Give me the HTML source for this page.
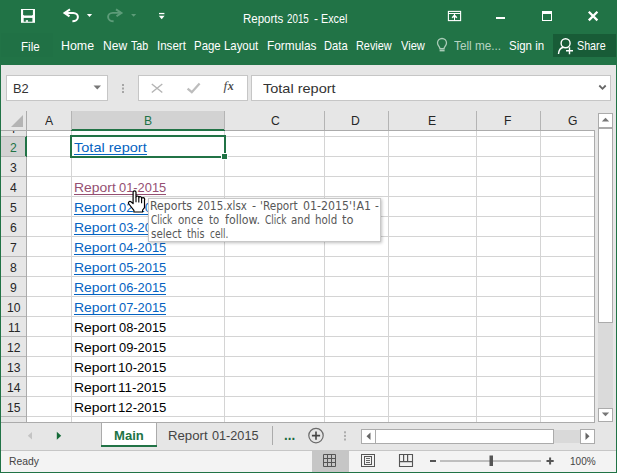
<!DOCTYPE html>
<html><head><meta charset="utf-8"><title>Reports 2015 - Excel</title>
<style>
html,body{margin:0;padding:0;}
body{width:617px;height:473px;overflow:hidden;position:relative;background:#e6e6e6;font-family:"Liberation Sans",sans-serif;}
.a{position:absolute;}
.t{position:absolute;white-space:pre;transform-origin:0 0;}
svg{position:absolute;overflow:visible;}
</style></head><body>
<div class="a" style="left:0px;top:0px;width:617px;height:65px;background:#217346;"></div>
<div class="a" style="left:1px;top:33px;width:52px;height:24px;background:#207145;"></div>
<div class="a" style="left:553px;top:34px;width:63px;height:23px;background:#185c37;"></div>
<div class="a" style="left:6px;top:75px;width:102px;height:26px;background:#fff;box-sizing:border-box;border:1px solid #c6c6c6;"></div>
<div class="a" style="left:138px;top:75px;width:110px;height:26px;background:#fff;box-sizing:border-box;border:1px solid #c6c6c6;"></div>
<div class="a" style="left:251px;top:75px;width:360px;height:26px;background:#fff;box-sizing:border-box;border:1px solid #c6c6c6;"></div>
<div class="a" style="left:1px;top:111px;width:594px;height:311px;background:#fff;"></div>
<div class="a" style="left:1px;top:111px;width:594px;height:19px;background:#e6e6e6;"></div>
<div class="a" style="left:1px;top:130px;width:594px;height:1px;background:#ababab;"></div>
<div class="a" style="left:1px;top:131px;width:25px;height:291px;background:#e6e6e6;"></div>
<div class="a" style="left:26px;top:111px;width:1px;height:311px;background:#ababab;"></div>
<div class="a" style="left:71px;top:111px;width:154px;height:18px;background:#d2d2d2;"></div>
<div class="a" style="left:71px;top:129px;width:154px;height:2px;background:#217346;"></div>
<div class="a" style="left:1px;top:137px;width:24px;height:19px;background:#d2d2d2;"></div>
<div class="a" style="left:25px;top:136px;width:2px;height:21px;background:#217346;"></div>
<div class="a" style="left:71px;top:131px;width:1px;height:291px;background:#d4d4d4;"></div>
<div class="a" style="left:71px;top:111px;width:1px;height:19px;background:#b4b4b4;"></div>
<div class="a" style="left:224px;top:131px;width:1px;height:291px;background:#d4d4d4;"></div>
<div class="a" style="left:224px;top:111px;width:1px;height:19px;background:#b4b4b4;"></div>
<div class="a" style="left:324px;top:131px;width:1px;height:291px;background:#d4d4d4;"></div>
<div class="a" style="left:324px;top:111px;width:1px;height:19px;background:#b4b4b4;"></div>
<div class="a" style="left:388px;top:131px;width:1px;height:291px;background:#d4d4d4;"></div>
<div class="a" style="left:388px;top:111px;width:1px;height:19px;background:#b4b4b4;"></div>
<div class="a" style="left:476px;top:131px;width:1px;height:291px;background:#d4d4d4;"></div>
<div class="a" style="left:476px;top:111px;width:1px;height:19px;background:#b4b4b4;"></div>
<div class="a" style="left:540px;top:131px;width:1px;height:291px;background:#d4d4d4;"></div>
<div class="a" style="left:540px;top:111px;width:1px;height:19px;background:#b4b4b4;"></div>
<div class="a" style="left:594px;top:130px;width:1px;height:293px;background:#ababab;"></div>
<div class="a" style="left:27px;top:136px;width:567px;height:1px;background:#d4d4d4;"></div>
<div class="a" style="left:1px;top:136px;width:25px;height:1px;background:#b8b8b8;"></div>
<div class="a" style="left:27px;top:156px;width:567px;height:1px;background:#d4d4d4;"></div>
<div class="a" style="left:1px;top:156px;width:25px;height:1px;background:#b8b8b8;"></div>
<div class="a" style="left:27px;top:176px;width:567px;height:1px;background:#d4d4d4;"></div>
<div class="a" style="left:1px;top:176px;width:25px;height:1px;background:#b8b8b8;"></div>
<div class="a" style="left:27px;top:196px;width:567px;height:1px;background:#d4d4d4;"></div>
<div class="a" style="left:1px;top:196px;width:25px;height:1px;background:#b8b8b8;"></div>
<div class="a" style="left:27px;top:216px;width:567px;height:1px;background:#d4d4d4;"></div>
<div class="a" style="left:1px;top:216px;width:25px;height:1px;background:#b8b8b8;"></div>
<div class="a" style="left:27px;top:236px;width:567px;height:1px;background:#d4d4d4;"></div>
<div class="a" style="left:1px;top:236px;width:25px;height:1px;background:#b8b8b8;"></div>
<div class="a" style="left:27px;top:256px;width:567px;height:1px;background:#d4d4d4;"></div>
<div class="a" style="left:1px;top:256px;width:25px;height:1px;background:#b8b8b8;"></div>
<div class="a" style="left:27px;top:276px;width:567px;height:1px;background:#d4d4d4;"></div>
<div class="a" style="left:1px;top:276px;width:25px;height:1px;background:#b8b8b8;"></div>
<div class="a" style="left:27px;top:296px;width:567px;height:1px;background:#d4d4d4;"></div>
<div class="a" style="left:1px;top:296px;width:25px;height:1px;background:#b8b8b8;"></div>
<div class="a" style="left:27px;top:316px;width:567px;height:1px;background:#d4d4d4;"></div>
<div class="a" style="left:1px;top:316px;width:25px;height:1px;background:#b8b8b8;"></div>
<div class="a" style="left:27px;top:336px;width:567px;height:1px;background:#d4d4d4;"></div>
<div class="a" style="left:1px;top:336px;width:25px;height:1px;background:#b8b8b8;"></div>
<div class="a" style="left:27px;top:356px;width:567px;height:1px;background:#d4d4d4;"></div>
<div class="a" style="left:1px;top:356px;width:25px;height:1px;background:#b8b8b8;"></div>
<div class="a" style="left:27px;top:376px;width:567px;height:1px;background:#d4d4d4;"></div>
<div class="a" style="left:1px;top:376px;width:25px;height:1px;background:#b8b8b8;"></div>
<div class="a" style="left:27px;top:396px;width:567px;height:1px;background:#d4d4d4;"></div>
<div class="a" style="left:1px;top:396px;width:25px;height:1px;background:#b8b8b8;"></div>
<div class="a" style="left:27px;top:416px;width:567px;height:1px;background:#d4d4d4;"></div>
<div class="a" style="left:1px;top:416px;width:25px;height:1px;background:#b8b8b8;"></div>
<div class="a" style="left:1px;top:422px;width:594px;height:1px;background:#ababab;"></div>
<svg style="left:0;top:0" width="617" height="473"><polygon points="23,115 23,127 11,127" fill="#b4b4b4"/></svg>
<div class="a" style="left:70px;top:135px;width:156px;height:23px;background:transparent;box-sizing:border-box;border:2px solid #217346;"></div>
<div class="a" style="left:221px;top:153px;width:7px;height:7px;background:#fff;"></div>
<div class="a" style="left:222px;top:154px;width:5px;height:5px;background:#217346;"></div>
<div class="a" style="left:598px;top:113px;width:15px;height:15px;background:#fff;box-sizing:border-box;border:1px solid #ababab;"></div>
<div class="a" style="left:598px;top:128px;width:15px;height:195px;background:#fff;box-sizing:border-box;border:1px solid #ababab;"></div>
<div class="a" style="left:598px;top:323px;width:15px;height:85px;background:#dadada;"></div>
<div class="a" style="left:598px;top:408px;width:15px;height:14px;background:#fff;box-sizing:border-box;border:1px solid #ababab;"></div>
<div class="a" style="left:361px;top:429px;width:15px;height:15px;background:#fff;box-sizing:border-box;border:1px solid #ababab;"></div>
<div class="a" style="left:375px;top:429px;width:179px;height:15px;background:#fff;box-sizing:border-box;border:1px solid #ababab;"></div>
<div class="a" style="left:554px;top:430px;width:26px;height:13px;background:#d9d9d9;"></div>
<div class="a" style="left:580px;top:429px;width:15px;height:15px;background:#fff;box-sizing:border-box;border:1px solid #ababab;"></div>
<div class="a" style="left:101px;top:423px;width:56px;height:23px;background:#fff;box-sizing:border-box;border-left:1px solid #ababab;border-right:1px solid #ababab;"></div>
<div class="a" style="left:101px;top:445px;width:56px;height:2px;background:#217346;"></div>
<div class="a" style="left:272px;top:426px;width:1px;height:19px;background:#ababab;"></div>
<div class="a" style="left:1px;top:450px;width:615px;height:1px;background:#c6c6c6;"></div>
<div class="a" style="left:1px;top:451px;width:615px;height:21px;background:#f3f3f3;"></div>
<div class="a" style="left:311.5px;top:451px;width:37px;height:21px;background:#c6c6c6;"></div>
<div class="a" style="left:0px;top:0px;width:1px;height:473px;background:#217346;"></div>
<div class="a" style="left:616px;top:0px;width:1px;height:473px;background:#217346;"></div>
<div class="a" style="left:0px;top:472px;width:617px;height:1px;background:#217346;"></div>
<div class="a" style="left:148px;top:198px;width:233px;height:44px;background:#fff;box-sizing:border-box;border:1px solid #c8c8c8;box-shadow:1px 1px 3px rgba(0,0,0,0.25);z-index:2;"></div>
<div class="a" style="left:12px;top:131px;width:4px;height:2px;overflow:hidden"><div class="t" style="left:-1.6px;top:-9.4px;font-size:12.8px;line-height:17px;color:#262626;transform:scaleX(0.95)">1</div></div>
<div class="t" style="left:0;top:10.74px;width:617px;height:16px;line-height:16px;font-size:12.3px;color:#fff;"><span class="t" style="left:242.76px;top:0;transform:scaleX(0.9354)">Reports</span> <span class="t" style="left:286.80px;top:0;transform:scaleX(0.7959)">2015</span> <span class="t" style="left:314.10px;top:0;transform:scaleX(0.9750)">-</span> <span class="t" style="left:321.12px;top:0;transform:scaleX(0.8752)">Excel</span></div>
<div class="t" style="left:20.58px;top:38.63px;line-height:16px;font-size:12.6px;color:#fff;transform:scaleX(0.9228);">File</div>
<div class="t" style="left:60.82px;top:37.63px;line-height:16px;font-size:12.6px;color:#fff;transform:scaleX(0.9850);">Home</div>
<div class="t" style="left:0;top:37.63px;width:617px;height:16px;line-height:16px;font-size:12.6px;color:#fff;"><span class="t" style="left:102.74px;top:0;transform:scaleX(0.9562)">New</span> <span class="t" style="left:131.40px;top:0;transform:scaleX(0.8522)">Tab</span></div>
<div class="t" style="left:156.68px;top:37.63px;line-height:16px;font-size:12.6px;color:#fff;transform:scaleX(0.9162);">Insert</div>
<div class="t" style="left:193.89px;top:37.63px;line-height:16px;font-size:12.6px;color:#fff;transform:scaleX(0.9085);">Page Layout</div>
<div class="t" style="left:266.56px;top:37.63px;line-height:16px;font-size:12.6px;color:#fff;transform:scaleX(0.9436);">Formulas</div>
<div class="t" style="left:323.91px;top:37.63px;line-height:16px;font-size:12.6px;color:#fff;transform:scaleX(0.8868);">Data</div>
<div class="t" style="left:355.94px;top:37.63px;line-height:16px;font-size:12.6px;color:#fff;transform:scaleX(0.8641);">Review</div>
<div class="t" style="left:401.20px;top:37.63px;line-height:16px;font-size:12.6px;color:#fff;transform:scaleX(0.8830);">View</div>
<div class="t" style="left:453.70px;top:37.63px;line-height:16px;font-size:12.6px;color:#b7d3c2;transform:scaleX(0.9341);">Tell me...</div>
<div class="t" style="left:509.40px;top:37.63px;line-height:16px;font-size:12.6px;color:#fff;transform:scaleX(0.9116);">Sign in</div>
<div class="t" style="left:577.30px;top:37.06px;line-height:17px;font-size:12.8px;color:#fff;transform:scaleX(0.8375);">Share</div>
<div class="t" style="left:12.51px;top:80.00px;line-height:17px;font-size:13px;color:#333;transform:scaleX(0.9884);">B2</div>
<div class="t" style="left:263.00px;top:80.00px;line-height:17px;font-size:13px;color:#333;transform:scaleX(1.1159);">Total report</div>
<div class="t" style="left:44.73px;top:112.06px;line-height:17px;font-size:12.8px;color:#262626;transform:scaleX(0.9500);">A</div>
<div class="t" style="left:270.73px;top:112.06px;line-height:17px;font-size:12.8px;color:#262626;transform:scaleX(0.9500);">C</div>
<div class="t" style="left:351.25px;top:112.06px;line-height:17px;font-size:12.8px;color:#262626;transform:scaleX(0.9500);">D</div>
<div class="t" style="left:427.73px;top:112.06px;line-height:17px;font-size:12.8px;color:#262626;transform:scaleX(0.9500);">E</div>
<div class="t" style="left:504.23px;top:112.06px;line-height:17px;font-size:12.8px;color:#262626;transform:scaleX(0.9500);">F</div>
<div class="t" style="left:567.73px;top:112.06px;line-height:17px;font-size:12.8px;color:#262626;transform:scaleX(0.9500);">G</div>
<div class="t" style="left:144.03px;top:112.06px;line-height:17px;font-size:12.8px;color:#217346;transform:scaleX(0.9500);">B</div>
<div class="t" style="left:10.28px;top:139.06px;line-height:17px;font-size:12.8px;color:#217346;transform:scaleX(0.9500);">2</div>
<div class="t" style="left:10.28px;top:159.06px;line-height:17px;font-size:12.8px;color:#262626;transform:scaleX(0.9500);">3</div>
<div class="t" style="left:10.28px;top:179.06px;line-height:17px;font-size:12.8px;color:#262626;transform:scaleX(0.9500);">4</div>
<div class="t" style="left:10.28px;top:199.06px;line-height:17px;font-size:12.8px;color:#262626;transform:scaleX(0.9500);">5</div>
<div class="t" style="left:10.28px;top:219.06px;line-height:17px;font-size:12.8px;color:#262626;transform:scaleX(0.9500);">6</div>
<div class="t" style="left:10.28px;top:239.06px;line-height:17px;font-size:12.8px;color:#262626;transform:scaleX(0.9500);">7</div>
<div class="t" style="left:10.28px;top:259.06px;line-height:17px;font-size:12.8px;color:#262626;transform:scaleX(0.9500);">8</div>
<div class="t" style="left:10.28px;top:279.06px;line-height:17px;font-size:12.8px;color:#262626;transform:scaleX(0.9500);">9</div>
<div class="t" style="left:7.49px;top:299.06px;line-height:17px;font-size:12.8px;color:#262626;transform:scaleX(0.9500);">10</div>
<div class="t" style="left:7.95px;top:319.06px;line-height:17px;font-size:12.8px;color:#262626;transform:scaleX(0.9500);">11</div>
<div class="t" style="left:7.49px;top:339.06px;line-height:17px;font-size:12.8px;color:#262626;transform:scaleX(0.9500);">12</div>
<div class="t" style="left:7.49px;top:359.06px;line-height:17px;font-size:12.8px;color:#262626;transform:scaleX(0.9500);">13</div>
<div class="t" style="left:7.49px;top:379.06px;line-height:17px;font-size:12.8px;color:#262626;transform:scaleX(0.9500);">14</div>
<div class="t" style="left:7.49px;top:399.06px;line-height:17px;font-size:12.8px;color:#262626;transform:scaleX(0.9500);">15</div>
<div class="t" style="left:74.00px;top:138.89px;line-height:17px;font-size:13.3px;color:#0563c1;transform:scaleX(1.0925);">Total report</div>
<div class="a" style="left:74px;top:154px;width:73px;height:1px;background:#0563c1"></div>
<div class="t" style="left:0;top:178.89px;width:617px;height:17px;line-height:17px;font-size:13.3px;color:#954f72;"><span class="t" style="left:73.85px;top:0;transform:scaleX(1.0480)">Report</span> <span class="t" style="left:118.90px;top:0;transform:scaleX(0.9689)">01-2015</span></div>
<div class="a" style="left:74px;top:194px;width:92px;height:1px;background:#954f72"></div>
<div class="t" style="left:0;top:198.89px;width:617px;height:17px;line-height:17px;font-size:13.3px;color:#0563c1;"><span class="t" style="left:73.85px;top:0;transform:scaleX(1.0480)">Report</span> <span class="t" style="left:118.90px;top:0;transform:scaleX(0.9689)">02-2015</span></div>
<div class="a" style="left:74px;top:214px;width:92px;height:1px;background:#0563c1"></div>
<div class="t" style="left:0;top:218.89px;width:617px;height:17px;line-height:17px;font-size:13.3px;color:#0563c1;"><span class="t" style="left:73.85px;top:0;transform:scaleX(1.0480)">Report</span> <span class="t" style="left:118.90px;top:0;transform:scaleX(0.9689)">03-2015</span></div>
<div class="a" style="left:74px;top:234px;width:92px;height:1px;background:#0563c1"></div>
<div class="t" style="left:0;top:238.89px;width:617px;height:17px;line-height:17px;font-size:13.3px;color:#0563c1;"><span class="t" style="left:73.85px;top:0;transform:scaleX(1.0480)">Report</span> <span class="t" style="left:118.90px;top:0;transform:scaleX(0.9689)">04-2015</span></div>
<div class="a" style="left:74px;top:254px;width:92px;height:1px;background:#0563c1"></div>
<div class="t" style="left:0;top:258.89px;width:617px;height:17px;line-height:17px;font-size:13.3px;color:#0563c1;"><span class="t" style="left:73.85px;top:0;transform:scaleX(1.0480)">Report</span> <span class="t" style="left:118.90px;top:0;transform:scaleX(0.9689)">05-2015</span></div>
<div class="a" style="left:74px;top:274px;width:92px;height:1px;background:#0563c1"></div>
<div class="t" style="left:0;top:278.89px;width:617px;height:17px;line-height:17px;font-size:13.3px;color:#0563c1;"><span class="t" style="left:73.85px;top:0;transform:scaleX(1.0480)">Report</span> <span class="t" style="left:118.90px;top:0;transform:scaleX(0.9689)">06-2015</span></div>
<div class="a" style="left:74px;top:294px;width:92px;height:1px;background:#0563c1"></div>
<div class="t" style="left:0;top:298.89px;width:617px;height:17px;line-height:17px;font-size:13.3px;color:#0563c1;"><span class="t" style="left:73.85px;top:0;transform:scaleX(1.0480)">Report</span> <span class="t" style="left:118.90px;top:0;transform:scaleX(0.9689)">07-2015</span></div>
<div class="a" style="left:74px;top:314px;width:92px;height:1px;background:#0563c1"></div>
<div class="t" style="left:0;top:318.89px;width:617px;height:17px;line-height:17px;font-size:13.3px;color:#000;"><span class="t" style="left:73.85px;top:0;transform:scaleX(1.0480)">Report</span> <span class="t" style="left:118.90px;top:0;transform:scaleX(0.9689)">08-2015</span></div>
<div class="t" style="left:0;top:338.89px;width:617px;height:17px;line-height:17px;font-size:13.3px;color:#000;"><span class="t" style="left:73.85px;top:0;transform:scaleX(1.0480)">Report</span> <span class="t" style="left:118.90px;top:0;transform:scaleX(0.9689)">09-2015</span></div>
<div class="t" style="left:0;top:358.89px;width:617px;height:17px;line-height:17px;font-size:13.3px;color:#000;"><span class="t" style="left:73.85px;top:0;transform:scaleX(1.0480)">Report</span> <span class="t" style="left:117.91px;top:0;transform:scaleX(0.9894)">10-2015</span></div>
<div class="t" style="left:0;top:378.89px;width:617px;height:17px;line-height:17px;font-size:13.3px;color:#000;"><span class="t" style="left:73.85px;top:0;transform:scaleX(1.0480)">Report</span> <span class="t" style="left:117.89px;top:0;transform:scaleX(1.0104)">11-2015</span></div>
<div class="t" style="left:0;top:398.89px;width:617px;height:17px;line-height:17px;font-size:13.3px;color:#000;"><span class="t" style="left:73.85px;top:0;transform:scaleX(1.0480)">Report</span> <span class="t" style="left:117.91px;top:0;transform:scaleX(0.9894)">12-2015</span></div>
<div class="t" style="left:0;top:198.52px;width:617px;height:15px;line-height:15px;font-size:11.5px;color:#575757;font-family:'DejaVu Sans',sans-serif;z-index:3;"><span class="t" style="left:149.95px;top:0;transform:scaleX(0.9485)">Reports</span> <span class="t" style="left:196.60px;top:0;transform:scaleX(0.8942)">2015.xlsx</span> <span class="t" style="left:251.80px;top:0;transform:scaleX(0.9750)">-</span> <span class="t" style="left:260.29px;top:0;transform:scaleX(0.9123)">'Report</span> <span class="t" style="left:303.20px;top:0;transform:scaleX(0.9577)">01-2015'!A1</span> <span class="t" style="left:375.30px;top:0;transform:scaleX(0.9250)">-</span></div>
<div class="t" style="left:0;top:212.52px;width:617px;height:15px;line-height:15px;font-size:11.5px;color:#575757;font-family:'DejaVu Sans',sans-serif;z-index:3;"><span class="t" style="left:150.90px;top:0;transform:scaleX(0.7750)">Click</span> <span class="t" style="left:178.10px;top:0;transform:scaleX(0.9043)">once</span> <span class="t" style="left:209.00px;top:0;transform:scaleX(0.8776)">to</span> <span class="t" style="left:224.50px;top:0;transform:scaleX(0.9593)">follow.</span> <span class="t" style="left:264.70px;top:0;transform:scaleX(0.7822)">Click</span> <span class="t" style="left:291.20px;top:0;transform:scaleX(0.8905)">and</span> <span class="t" style="left:314.81px;top:0;transform:scaleX(0.8929)">hold</span> <span class="t" style="left:342.10px;top:0;transform:scaleX(0.9905)">to</span></div>
<div class="t" style="left:0;top:226.52px;width:617px;height:15px;line-height:15px;font-size:11.5px;color:#575757;font-family:'DejaVu Sans',sans-serif;z-index:3;"><span class="t" style="left:150.90px;top:0;transform:scaleX(0.8973)">select</span> <span class="t" style="left:186.90px;top:0;transform:scaleX(0.8336)">this</span> <span class="t" style="left:209.60px;top:0;transform:scaleX(0.7811)">cell.</span></div>
<div class="t" style="left:113.70px;top:427.00px;line-height:17px;font-size:13px;color:#217346;font-weight:bold;transform:scaleX(1.0044);">Main</div>
<div class="t" style="left:0;top:427.00px;width:617px;height:17px;line-height:17px;font-size:13px;color:#444;"><span class="t" style="left:167.58px;top:0;transform:scaleX(1.0154)">Report</span> <span class="t" style="left:212.30px;top:0;transform:scaleX(0.9752)">01-2015</span></div>
<div class="t" style="left:283.70px;top:426.15px;line-height:18px;font-size:14px;color:#1c6a3f;font-weight:bold;transform:scaleX(0.9555);">...</div>
<div class="t" style="left:8.50px;top:454.19px;line-height:14px;font-size:11px;color:#444;transform:scaleX(0.9413);">Ready</div>
<div class="t" style="left:569.80px;top:454.19px;line-height:14px;font-size:11px;color:#444;transform:scaleX(0.9135);">100%</div>
<svg style="left:0;top:0;z-index:4" width="617" height="473" fill="none">
<!-- save -->
<rect x="21" y="9" width="14" height="13.8" fill="#fff"/>
<path d="M23.1 10 H32.9 V14.6 L32 15.6 H24 L23.1 14.6 Z" fill="#217346"/>
<rect x="23.7" y="17.9" width="8.7" height="3.8" fill="#217346"/>
<rect x="25.8" y="20.2" width="2.2" height="1.6" fill="#fff"/>
<!-- undo -->
<path d="M66 12.9 H73.2 C76.3 12.9 77.9 15 77.9 17 C77.9 19.6 75.4 21.3 72.4 21.3" stroke="#fff" stroke-width="2"/>
<path d="M70 9.3 L64.6 12.9 L69.5 16.3 M65 12.9 L68 12" stroke="#fff" stroke-width="2.1" stroke-linejoin="miter"/>
<polygon points="86.9,14 92.1,14 89.5,17" fill="#fff"/>
<!-- redo -->
<path d="M120 12.9 H112.8 C109.7 12.9 108.1 15 108.1 17 C108.1 19.6 110.6 21.3 113.6 21.3" stroke="#5d9c79" stroke-width="1.9"/>
<path d="M116 9.3 L121.4 12.9 L116.5 16.3" stroke="#5d9c79" stroke-width="2"/>
<polygon points="131.1,14 136.2,14 133.65,16.8" fill="#5d9c79"/>
<!-- qat customize -->
<rect x="159" y="12.9" width="5.4" height="1.3" fill="#fff"/>
<polygon points="158.8,15.8 164.6,15.8 161.7,19.3" fill="#fff"/>
<!-- ribbon display -->
<rect x="448.4" y="11.4" width="12.2" height="9.2" stroke="#fff" stroke-width="1.1"/>
<path d="M448 13.5 H461" stroke="#fff" stroke-width="1"/>
<path d="M454.5 21 V14" stroke="#fff" stroke-width="1"/><path d="M452.2 17.8 L454.5 15.5 L456.8 17.8" stroke="#fff" stroke-width="1.6"/>
<!-- minimize -->
<rect x="496" y="17" width="9" height="2" fill="#fff"/>
<!-- maximize -->
<rect x="542.5" y="12" width="9" height="8.5" stroke="#fff" stroke-width="1"/>
<rect x="542" y="11" width="10" height="3" fill="#fff"/>
<!-- close -->
<path d="M588.8 11.8 L597.4 20.4 M597.4 11.8 L588.8 20.4" stroke="#fff" stroke-width="2.3"/>
<!-- lightbulb -->
<path d="M439.9 48.6 C439.9 46.4 437.5 45.6 437.5 43 A4.5 4.5 0 0 1 446.5 43 C446.5 45.6 444.1 46.4 444.1 48.6 Z" stroke="#a9cbb7" stroke-width="1.3"/>
<rect x="439.6" y="49.5" width="5" height="1.9" fill="#a9cbb7"/>
<!-- share person -->
<circle cx="565.6" cy="43.3" r="4.5" stroke="#fff" stroke-width="1.4"/>
<path d="M558.5 54 C558.8 50 561 47.8 563.5 47.3" stroke="#fff" stroke-width="1.4"/>
<path d="M569.5 47.3 V54.3 M566 50.8 H573" stroke="#fff" stroke-width="1.4"/>
<!-- name box dropdown -->
<polygon points="93.5,85.5 101,85.5 97.25,89.5" fill="#777"/>
<!-- formula bar dots -->
<rect x="122" y="84" width="2" height="2" fill="#a6a6a6"/><rect x="122" y="87.5" width="2" height="2" fill="#a6a6a6"/><rect x="122" y="91" width="2" height="2" fill="#a6a6a6"/>
<!-- cancel / enter -->
<path d="M151.8 84 L162.3 92.5 M162.3 84 L151.8 92.5" stroke="#b4b4b4" stroke-width="1.4"/>
<path d="M187.6 88.6 L191.8 92.2 L199.6 83.6" stroke="#bdbdbd" stroke-width="2.3"/>
<!-- formula chevron -->
<path d="M599.3 85.5 L602.5 88.8 L605.7 85.5" stroke="#666" stroke-width="1.8"/>
<!-- scroll arrows -->
<polygon points="601.8,121.5 609.2,121.5 605.5,117.8" fill="#777"/>
<polygon points="601.8,412.5 609.2,412.5 605.5,416.2" fill="#777"/>
<polygon points="370.5,432.5 370.5,440 366.5,436.2" fill="#666"/>
<polygon points="585.5,432.5 585.5,440 589.5,436.2" fill="#666"/>
<!-- sheet nav -->
<polygon points="32,432 32,439.5 27.8,435.7" fill="#c4c4c4"/>
<polygon points="56.8,431.8 56.8,439.7 61.2,435.7" fill="#156a38"/>
<!-- new sheet -->
<circle cx="316" cy="435.6" r="7.2" stroke="#6a6a6a" stroke-width="1.2"/>
<path d="M316 431.5 V439.7 M311.9 435.6 H320.1" stroke="#444" stroke-width="1.6"/>
<!-- tab dots -->
<rect x="344" y="431.3" width="2" height="2" fill="#adadad"/><rect x="344" y="434.9" width="2" height="2" fill="#adadad"/><rect x="344" y="438.5" width="2" height="2" fill="#adadad"/>
<!-- view icons -->
<path d="M323.5 454.5 H335.5 V466.5 H323.5 Z M327.5 454.5 V466.5 M331.5 454.5 V466.5 M323.5 458.5 H335.5 M323.5 462.5 H335.5" stroke="#555" stroke-width="1"/>
<rect x="361.5" y="454.5" width="13" height="12" stroke="#555" stroke-width="1"/>
<rect x="364.5" y="456.5" width="7" height="8" stroke="#555" stroke-width="1"/>
<path d="M366 458.5 H370 M366 460.5 H370 M366 462.5 H370" stroke="#555" stroke-width="0.9"/>
<path d="M399.5 454.5 H412.5 V466.5 H399.5 Z" stroke="#555" stroke-width="1.1"/>
<path d="M399.5 461.6 H412.5 M403.6 454.5 V461.6 M407.6 454.5 V461.6" stroke="#555" stroke-width="1.2"/>
<!-- zoom -->
<rect x="430" y="460" width="6" height="2" fill="#555"/>
<path d="M440 461 H541" stroke="#8a8a8a" stroke-width="1"/>
<rect x="489.5" y="455.5" width="3.5" height="10.5" fill="#555"/>
<path d="M546.5 461 H553.7 M550.1 457.4 V464.6" stroke="#555" stroke-width="2"/>
<!-- hand cursor -->
<path d="M133.1 192.3 a1.45 1.45 0 0 1 2.9 0 V197.2 a1.4 1.4 0 0 1 2.8 0.5 a1.4 1.4 0 0 1 2.8 0.9 a1.5 1.5 0 0 1 2.9 1.5 V207.6 L142.6 210 V212 H133.9 V210.3 L128.9 204 a1.5 1.5 0 0 1 2.1 -2.2 L133.1 203.6 Z" fill="#fff" stroke="#000" stroke-width="1.2" stroke-linejoin="round"/>
<path d="M136 197.2 V202.2 M138.8 198 V202.6 M141.6 198.9 V203.2" stroke="#000" stroke-width="1.1"/>
</svg>
<div class="t" style="left:223.6px;top:77.3px;font-family:'Liberation Serif',serif;font-style:italic;font-size:13.5px;line-height:18px;color:#4a4a4a;z-index:4">f<span style="font-size:12px;font-weight:bold;margin-left:0.3px;position:relative;top:0px">x</span></div>
</body></html>
